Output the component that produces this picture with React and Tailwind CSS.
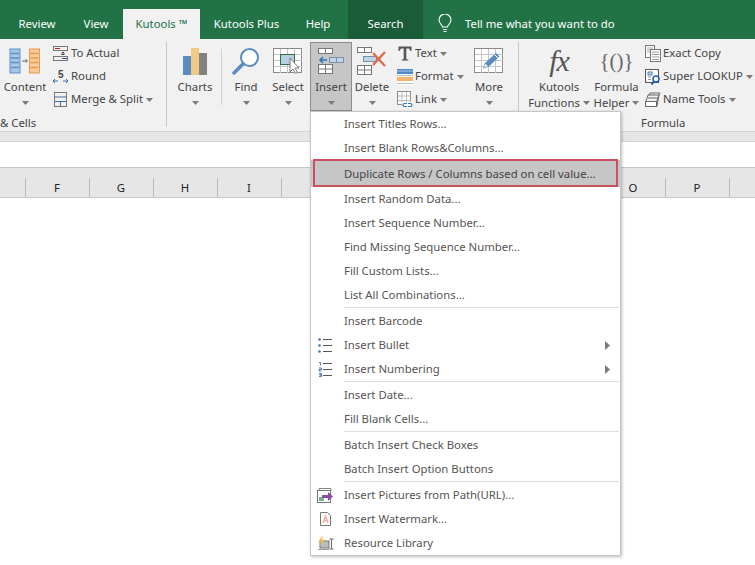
import React from "react";

const Caret = ({ className = "" }) => (
  <svg width="7" height="4" viewBox="0 0 7 4" className={className}><path d="M0 0h7L3.5 4z" fill="#7a7a7a" /></svg>
);

const Tab = ({ w, children, active, dark }) => (
  <div className={`flex items-center justify-center ${w} ${active ? "bg-[#f1f1f1] text-[#217346] mt-[9px] h-[30px] pb-[1px]" : "h-full text-white pt-[8px]"} ${dark ? "bg-[#1a5c38]" : ""}`}>{children}</div>
);

const Large = ({ w, icon, label, label2, caret = true, active, inlineCaret }) => (
  <div className={`flex flex-col items-center shrink-0 ${w} h-[69px] border ${active ? "bg-[#c6c6c6] border-[#8c8c8c]" : "border-transparent"}`}>
    <div className="h-[36px] flex items-center justify-center shrink-0">{icon}</div>
    <div className="leading-[16px] whitespace-nowrap">{label}</div>
    {label2 ? (
      <div className="leading-[16px] whitespace-nowrap flex items-center gap-[3px]">{label2}{inlineCaret && <Caret />}</div>
    ) : (
      caret && <div className="h-[16px] flex items-center"><Caret /></div>
    )}
  </div>
);

const Small = ({ icon, label, caret }) => (
  <div className="h-[23px] flex items-center gap-[2px] whitespace-nowrap">
    <div className="w-[17px] h-[20px] flex items-center justify-center shrink-0">{icon}</div>
    <span className="pb-[2px]">{label}</span>
    {caret && <Caret className="ml-px" />}
  </div>
);

const ColumnsIcon = () => (
  <svg width="32" height="26" viewBox="0 0 32 26" fill="none">
    <rect x="1" y="1" width="10" height="24" fill="#a9c6e6" stroke="#5b8fc7" />
    <path d="M2 5.5h8M2 10h8M2 14.5h8M2 19.5h8" stroke="#5b8fc7" strokeWidth="1.4" />
    <rect x="20.5" y="1" width="10" height="24" fill="#f6cd9a" stroke="#e59a4c" />
    <path d="M21.5 5.5h8M21.5 10h8M21.5 14.5h8M21.5 19.5h8" stroke="#e59a4c" strokeWidth="1.4" />
    <path d="M13 13h5M16.5 11.5l2 1.5-2 1.5" stroke="#666" />
  </svg>
);
const ToActualIcon = () => (
  <svg width="16" height="16" viewBox="0 0 16 16" fill="none">
    <rect x="0.5" y="0.5" width="14" height="4" stroke="#777" /><path d="M2 2.5h5" stroke="#b22" />
    <path d="M10 5.500l-2 2h4z" fill="#444" />
    <path d="M8.5 8.500h3" stroke="#444" />
    <rect x="0.5" y="10.5" width="14" height="4" stroke="#777" /><path d="M9 12.5h5" stroke="#1f4fb0" />
  </svg>
);
const RoundIcon = () => (
  <svg width="17" height="14" viewBox="0 0 17 14" fill="none">
    <text x="6" y="8" fontSize="10" fontWeight="700" fill="#444" fontFamily="Liberation Sans">5</text>
    <path d="M1 11h5M11 11h5" stroke="#3a6ea5" />
    <path d="M3 9l-2 2 2 2M14 9l2 2-2 2" stroke="#3a6ea5" />
  </svg>
);
const MergeIcon = () => (
  <svg width="14" height="15" viewBox="0 0 14 15" fill="none">
    <rect x="0.5" y="0.5" width="12" height="14" stroke="#777" />
    <path d="M1 5h11M1 9.5h11M6.5 9.5V14" stroke="#3a6ea5" />
  </svg>
);
const ChartsIcon = () => (
  <svg width="32" height="27" viewBox="0 0 32 27">
    <rect x="4" y="8" width="8" height="19" fill="#5b8cc0" />
    <rect x="12" y="0" width="8" height="27" fill="#f0c985" />
    <rect x="20" y="5" width="8" height="22" fill="#828282" />
  </svg>
);
const FindIcon = () => (
  <svg width="28" height="28" viewBox="0 0 28 28" fill="none">
    <circle cx="17.5" cy="10.5" r="8.5" stroke="#5b8cc0" strokeWidth="2" fill="#fff" />
    <path d="M11 17L2 26" stroke="#5b8cc0" strokeWidth="3.5" strokeLinecap="round" />
  </svg>
);
const SelectIcon = () => (
  <svg width="30" height="26" viewBox="0 0 30 26" fill="none">
    <rect x="0.5" y="0.5" width="28" height="24" fill="#fff" stroke="#8a8a8a" />
    <path d="M7.5 1v24M14.5 1v24M21.5 1v24M1 6.5h28M1 12.5h28M1 18.5h28" stroke="#c4c4c4" />
    <rect x="7.5" y="6.5" width="14" height="10" fill="#b7cede" stroke="#2f6b4f" />
    <path d="M17 10v14l3-3 2.5 4.5 2-1-2.5-4.5h4z" fill="#fff" stroke="#777" />
  </svg>
);
const InsertIcon = () => (
  <svg width="27" height="26" viewBox="0 0 27 26" fill="none">
    <rect x="0.5" y="0.5" width="14" height="5" fill="#fff" stroke="#777" /><path d="M7.5 1v5" stroke="#777" />
    <rect x="11.5" y="9.5" width="14" height="5" fill="#c0d4e8" stroke="#7a8fa5" /><path d="M18.5 10v5" stroke="#7a8fa5" />
    <path d="M9 12H2M5 9l-3 3 3 3" stroke="#2e75b6" strokeWidth="1.6" />
    <rect x="0.5" y="16.5" width="14" height="9" fill="#fff" stroke="#777" /><path d="M1 21h14M7.5 17v9" stroke="#777" />
  </svg>
);
const DeleteIcon = () => (
  <svg width="31" height="29" viewBox="0 0 31 29" fill="none">
    <rect x="0.5" y="0.5" width="14" height="5" fill="#fff" stroke="#777" /><path d="M7.5 1v5" stroke="#777" />
    <rect x="6.5" y="9.5" width="13" height="5" fill="#c0d4e8" stroke="#7a8fa5" />
    <rect x="0.5" y="18.5" width="14" height="9" fill="#fff" stroke="#777" /><path d="M1 23h14M7.5 19v9" stroke="#777" />
    <path d="M16 6l12 13M28 5L16 18" stroke="#dd6b4a" strokeWidth="2.4" />
  </svg>
);
const TextIcon = () => (
  <svg width="16" height="17" viewBox="0 0 16 17">
    <path d="M1.500 1.500h13v4.500h-1l-1.500-2.500h-2.700v10.500l2 .8v.7H4.700v-.7l2-.8V3.500H4l-1.500 2.500h-1z" fill="#555" />
  </svg>
);
const FormatIcon = () => (
  <svg width="16" height="16" viewBox="0 0 16 16">
    <rect width="16" height="16" fill="#fff" />
    <rect width="16" height="5" fill="#4d8bc8" />
    <path d="M0 2h16" stroke="#bcd4ec" strokeWidth=".8" />
    <rect y="8" width="16" height="4" fill="#f5b36b" />
    <path d="M0 6.500h16M0 14.500h16" stroke="#bbb" />
  </svg>
);
const LinkIcon = () => (
  <svg width="16" height="17" viewBox="0 0 16 17" fill="none">
    <rect x="0.5" y="0.5" width="13" height="13" fill="#fff" stroke="#8a8a8a" />
    <path d="M5 1v13M9.5 1v13M1 5h13M1 9.5h13" stroke="#bbb" />
    <rect x="5" y="11" width="11" height="6" fill="#fff" />
    <path d="M10 12.5H7.5a1.5 1.5 0 0 0 0 3H10M11 12.5h2.5a1.5 1.5 0 0 1 0 3H11" stroke="#2e75b6" strokeWidth="1.2" />
  </svg>
);
const MoreIcon = () => (
  <svg width="30" height="26" viewBox="0 0 30 26" fill="none">
    <rect x="0.5" y="0.5" width="28" height="24" fill="#fff" stroke="#8a8a8a" />
    <path d="M7.5 1v24M14.5 1v24M21.5 1v24M1 6.5h28M1 12.5h28M1 18.5h28" stroke="#c4c4c4" />
    <path d="M9.500 20l1.500-5L22 5l3.500 3.500-10.500 10z" fill="#5b8cc0" />
    <path d="M9.500 20l1.500-5 3.500 3.500z" fill="#f2f2f2" stroke="#5b8cc0" strokeWidth=".6" />
    <path d="M20.500 6.500l3.500 3.500" stroke="#fff" />
  </svg>
);
const FxIcon = () => (
  <div className="font-['Liberation_Serif'] italic text-[30px] leading-[30px] text-[#555] tracking-[-1px]">fx</div>
);
const BracesIcon = () => (
  <div className="font-['Liberation_Serif'] text-[21px] leading-[24px] text-[#666] whitespace-nowrap">{"{()}"}</div>
);
const ExactCopyIcon = () => (
  <svg width="16" height="17" viewBox="0 0 16 17" fill="none">
    <rect x="0.5" y="0.5" width="9" height="12" fill="#fff" stroke="#777" />
    <path d="M2 3h6M2 5h6M2 7h6" stroke="#aaa" />
    <rect x="5.5" y="4.5" width="10" height="12" fill="#fff" stroke="#777" />
    <path d="M7 7h7M7 9.5h7M7 12h7M7 14.5h7" stroke="#999" />
  </svg>
);
const LookupIcon = () => (
  <svg width="16" height="16" viewBox="0 0 16 16" fill="none">
    <rect x="0.5" y="0.5" width="13" height="13" fill="#fff" stroke="#555" />
    <rect x="3" y="3" width="4" height="3" fill="#c0d4e8" stroke="#4d7fb0" />
    <path d="M3 8h3M3 10.5h3" stroke="#999" />
    <circle cx="11" cy="10" r="3" fill="#fff" stroke="#1f5fae" strokeWidth="1.5" />
    <path d="M9 12.5l-2.5 3" stroke="#1f5fae" strokeWidth="2" />
  </svg>
);
const NameToolsIcon = () => (
  <svg width="16" height="16" viewBox="0 0 16 16" fill="none">
    <rect x="0.5" y="9.5" width="11" height="5" fill="#fff" stroke="#666" />
    <path d="M1 9l2-6h11l-2 6M3 6h11M4 3l1-2h10l-1 2" stroke="#666" />
    <path d="M14 3l-2 11" stroke="#666" />
  </svg>
);
const Lightbulb = () => (
  <svg width="14" height="19" viewBox="0 0 14 19" fill="none" stroke="#fff" strokeWidth="1.1">
    <path d="M4.5 13c0-2-3.500-3.500-3.500-7a6 6 0 0 1 12 0c0 3.500-3.500 5-3.500 7z" />
    <path d="M5 15.500h4M5.500 17.500h3" />
  </svg>
);
const BulletIcon = () => (
  <svg width="14" height="15" viewBox="0 0 14 15" fill="none">
    <circle cx="1.500" cy="1.500" r="1.300" fill="#3e6fae" /><circle cx="1.500" cy="7.500" r="1.300" fill="#3e6fae" /><circle cx="1.500" cy="13.500" r="1.300" fill="#3e6fae" />
    <path d="M5 1.500h9M5 7.500h9M5 13.500h9" stroke="#555" />
  </svg>
);
const NumberIcon = () => (
  <svg width="14" height="15" viewBox="0 0 14 15" fill="none">
    <path d="M1 .5h1.500v3M1 6h2.500v1.500H1V9h2.500M1 11.500h2.500v1.500H1.500h2v1.500H1" stroke="#3e6fae" strokeWidth=".9" />
    <path d="M5 1.500h9M5 7.500h9M5 13.500h9" stroke="#555" />
  </svg>
);
const PicturesIcon = () => (
  <svg width="16" height="15" viewBox="0 0 16 15" fill="none">
    <path d="M2 2V.5h12V3" stroke="#888" />
    <rect x="0.500" y="2.500" width="13" height="12" fill="#fff" stroke="#777" />
    <rect x="2" y="9" width="5" height="4" fill="#74b58f" />
    <path d="M5 7h6V4l5 4.500-5 4.500V10H5z" fill="#8a4cae" />
  </svg>
);
const WatermarkIcon = () => (
  <svg width="11" height="14" viewBox="0 0 11 14" fill="none">
    <path d="M.5.5h7l3 3v10H.5z" fill="#fff" stroke="#777" />
    <path d="M3 11l2.500-7L8 11M3.800 8.500h3.500" stroke="#eeb0a2" strokeWidth="1.500" />
  </svg>
);
const LibraryIcon = () => (
  <svg width="17" height="16" viewBox="0 0 17 16" fill="none">
    <rect x="3" y="6" width="9" height="7" fill="#bdbdbd" stroke="#777" />
    <path d="M6 0L1 7h3L2.500 11 8 4.500H5z" fill="#edb85f" />
    <path d="M12.500 4h4M14.500 4v10M12.500 14h4" stroke="#666" />
    <path d="M1 14.500h11" stroke="#999" />
  </svg>
);

const Item = ({ label, icon, arrow, h = "h-6", active }) => (
  <div className={`relative flex items-center ${h} pl-[33px] whitespace-nowrap ${active ? "bg-[#c6c6c6] text-[#444]" : ""}`}>
    {icon && <div className="absolute left-[5px] w-[18px] flex justify-center">{icon}</div>}
    <span>{label}</span>
    {arrow && (
      <svg width="5" height="9" viewBox="0 0 5 9" className="absolute right-[10px]"><path d="M0 0l5 4.500L0 9z" fill="#7a7a7a" /></svg>
    )}
  </div>
);
const Sep = () => (
  <div className="h-[2px] pl-[33px] pr-px"><div className="h-px bg-[#dcdcdc]" /></div>
);

const cols = ["F", "G", "H", "I", "", "", "", "", "", "O", "P"];

export default function App() {
  return (
    <div className="relative w-[755px] h-[565px] overflow-hidden bg-white text-[#444] text-[11.35px] font-['Noto_Sans',sans-serif]">
      <div className="h-[39px] bg-[#217346] flex pl-[5px]">
        <Tab w="w-[64px]">Review</Tab>
        <Tab w="w-[54px]">View</Tab>
        <Tab w="w-[77px]" active>Kutools ™</Tab>
        <Tab w="w-[93px]">Kutools Plus</Tab>
        <Tab w="w-[50px]">Help</Tab>
        <div className="w-[5px]" />
        <Tab w="w-[75px]" dark>Search</Tab>
        <div className="flex items-center pl-[15px] gap-[13px] text-white pt-[8px]">
          <Lightbulb />
          <span>Tell me what you want to do</span>
        </div>
      </div>

      <div className="h-[92px] bg-[#f1f1f1] flex pt-[3px]">
        <div className="w-[167px] shrink-0 border-r border-[#c6c6c6] mb-[4px] flex flex-col justify-between">
          <div className="flex">
            <Large w="w-[50px]" icon={<ColumnsIcon />} label="Content" />
            <div className="flex flex-col pl-[2px]">
              <Small icon={<ToActualIcon />} label="To Actual" />
              <Small icon={<RoundIcon />} label="Round" />
              <Small icon={<MergeIcon />} label="Merge & Split" caret />
            </div>
          </div>
          <div className="leading-[16px] -mb-[4px]">& Cells</div>
        </div>

        <div className="w-[352px] shrink-0 border-r border-[#c6c6c6] mb-[4px] flex">
          <Large w="w-[52px] ml-[2px]" icon={<ChartsIcon />} label="Charts" />
          <div className="w-px h-[56px] bg-[#d0d0d0] mt-[7px]" />
          <Large w="w-[42px] ml-[3px]" icon={<FindIcon />} label="Find" />
          <Large w="w-[42px]" icon={<SelectIcon />} label="Select" />
          <Large w="w-[42px] ml-px" icon={<InsertIcon />} label="Insert" active />
          <Large w="w-[40px]" icon={<DeleteIcon />} label="Delete" />
          <div className="flex flex-col pl-[4px] w-[77px] shrink-0">
            <Small icon={<TextIcon />} label="Text" caret />
            <Small icon={<FormatIcon />} label="Format" caret />
            <Small icon={<LinkIcon />} label="Link" caret />
          </div>
          <Large w="w-[40px]" icon={<MoreIcon />} label="More" />
        </div>

        <div className="flex-1 flex flex-col justify-between mb-[4px]">
          <div className="flex pl-[10px]">
            <Large w="w-[60px]" icon={<FxIcon />} label="Kutools" label2="Functions" inlineCaret />
            <Large w="w-[55px]" icon={<BracesIcon />} label="Formula" label2="Helper" inlineCaret />
            <div className="flex flex-col">
              <Small icon={<ExactCopyIcon />} label="Exact Copy" />
              <Small icon={<LookupIcon />} label="Super LOOKUP" caret />
              <Small icon={<NameToolsIcon />} label="Name Tools" caret />
            </div>
          </div>
          <div className="leading-[16px] pl-[122px] -mb-[4px]">Formula</div>
        </div>
      </div>

      <div className="h-[11px] bg-[#e6e6e6] border-y border-[#d4d4d4]" />
      <div className="h-[25px] bg-white" />
      <div className="h-[31px] bg-[#e6e6e6] border-y border-[#c6c6c6] flex pl-[25px] text-[#222]">
        {cols.map((c, i) => (
          <div key={i} className="w-16 shrink-0 flex items-end">
            <div className="h-[19px] w-full border-x border-l-[#b8b8b8] border-r-transparent flex items-center justify-center">{c}</div>
          </div>
        ))}
        <div className="flex-1 flex items-end">
          <div className="h-[19px] w-full border-l border-[#b8b8b8]" />
        </div>
      </div>

      <div className="absolute left-[310px] top-[111px] w-[311px] bg-white border border-[#c6c6c6] shadow-[1px_1px_3px_rgba(0,0,0,0.25)] text-[#555] flex flex-col">
        <Item label="Insert Titles Rows..." />
        <Item label="Insert Blank Rows&Columns..." />
        <div className="relative">
          <Item label="Duplicate Rows / Columns based on cell value..." h="h-[27px]" active />
          <div className="absolute inset-x-[2px] -top-px bottom-0 border-2 border-[#c8505f]" />
        </div>
        <Item label="Insert Random Data..." />
        <Item label="Insert Sequence Number..." />
        <Item label="Find Missing Sequence Number..." />
        <Item label="Fill Custom Lists..." />
        <Item label="List All Combinations..." />
        <Sep />
        <Item label="Insert Barcode" />
        <Item label="Insert Bullet" icon={<BulletIcon />} arrow />
        <Item label="Insert Numbering" icon={<NumberIcon />} arrow />
        <Sep />
        <Item label="Insert Date..." />
        <Item label="Fill Blank Cells..." />
        <Sep />
        <Item label="Batch Insert Check Boxes" />
        <Item label="Batch Insert Option Buttons" />
        <Sep />
        <Item label="Insert Pictures from Path(URL)..." icon={<PicturesIcon />} />
        <Item label="Insert Watermark..." icon={<WatermarkIcon />} />
        <Item label="Resource Library" icon={<LibraryIcon />} />
      </div>
    </div>
  );
}
